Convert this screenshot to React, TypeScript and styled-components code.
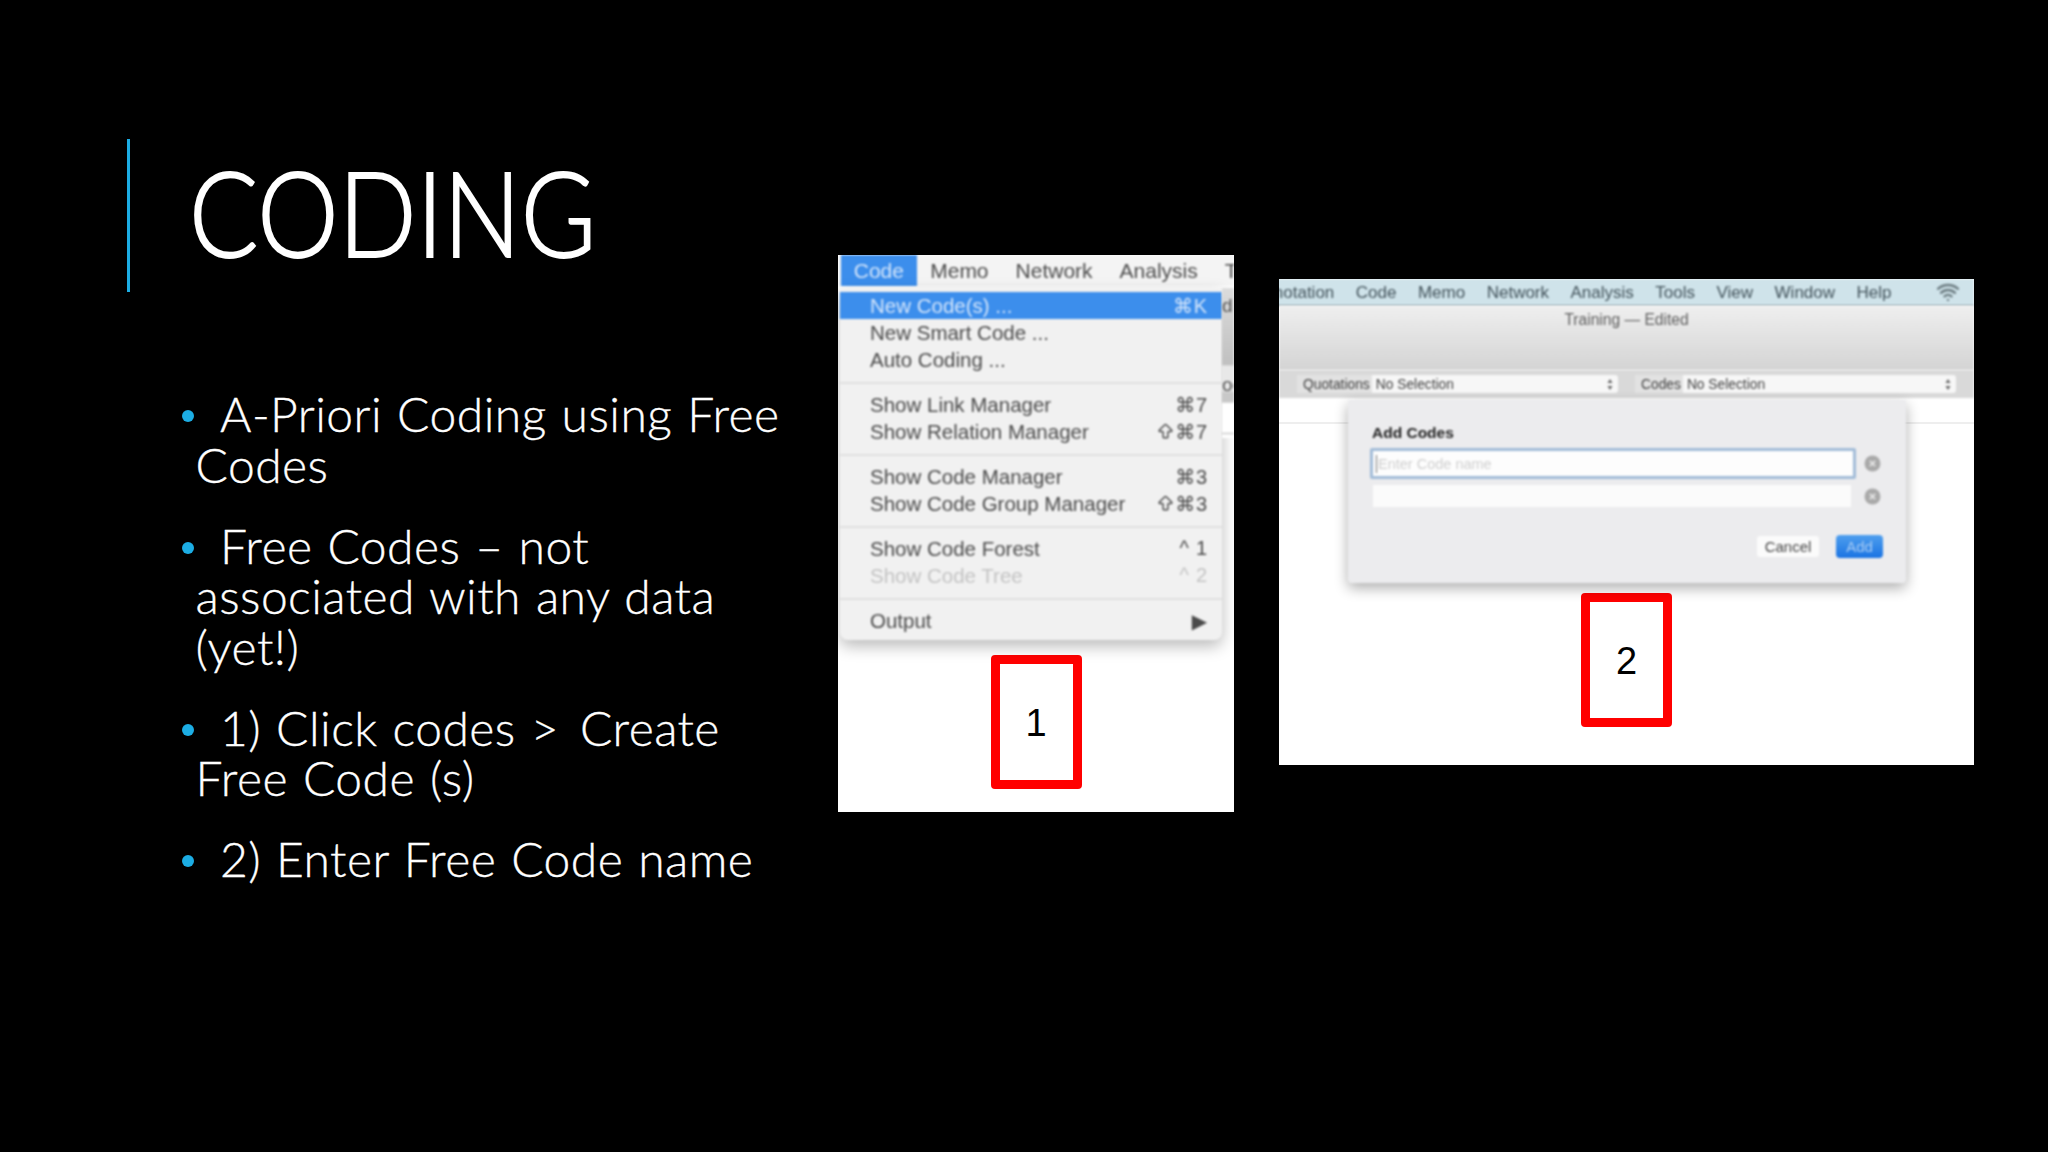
import React from 'react';
import styled, { createGlobalStyle } from 'styled-components';
import { ArrowBigUp, Wifi } from 'lucide-react';

const GlobalStyle = createGlobalStyle`
  * {
    box-sizing: border-box;
  }

  html,
  body {
    margin: 0;
    padding: 0;
    background: #000000;
  }
`;

const Slide = styled.div`
  display: flex;
  align-items: flex-start;
  width: 2048px;
  height: 1152px;
  overflow: hidden;
  background: #000000;
`;

const TextColumn = styled.div`
  flex: 0 0 838px;
  padding: 139px 48px 0 127px;
  font-family: 'Lato', 'Liberation Sans', sans-serif;
  font-weight: 300;
  color: #ffffff;
`;

const Heading = styled.h1`
  display: flex;
  align-items: center;
  height: 153px;
  margin: 0;
  padding: 0 0 8px 59px;
  border-left: 3px solid #1cade4;
  font-size: 118px;
  font-weight: 300;
  line-height: 1;
`;

const HeadingText = styled.span`
  display: inline-block;
  transform: scaleX(0.87);
  transform-origin: left center;
  -webkit-text-stroke: 2px #ffffff;
`;

const Points = styled.ul`
  margin: 97px 0 0;
  padding: 0 0 0 68.5px;
  list-style: none;
  font-size: 48px;
  line-height: 50.5px;
  letter-spacing: 0.45px;
  word-spacing: 1.5px;
  -webkit-text-stroke: 0.35px #ffffff;
`;

const Point = styled.li`
  margin-bottom: 30.5px;
  text-indent: -13.5px;
`;

const Dot = styled.span`
  display: inline-block;
  width: 12px;
  height: 12px;
  margin-right: 26px;
  border-radius: 50%;
  background: #1cade4;
  vertical-align: 10px;
`;

const Chevron = styled.span`
  margin-right: 6px;
`;

const ShotOne = styled.div`
  display: flex;
  flex-direction: column;
  flex: 0 0 396px;
  height: 557px;
  margin-top: 255px;
  overflow: hidden;
  background: #ffffff;
  font-family: 'Liberation Sans', Arial, sans-serif;
`;

const TabBar = styled.div`
  display: flex;
  flex: 0 0 31px;
  padding-left: 3px;
  overflow: hidden;
  background: #f4f4f4;
  filter: blur(0.8px);
`;

const Tab = styled.div<{ $active?: boolean }>`
  display: flex;
  align-items: center;
  padding: 0 ${(p) => (p.$active ? '12.75px' : '13.5px')};
  background: ${(p) => (p.$active ? '#3c8eec' : 'transparent')};
  color: ${(p) => (p.$active ? '#d5e6fb' : '#4c4c4c')};
  font-size: 21px;
  white-space: nowrap;
`;

const MenuArea = styled.div`
  display: flex;
  flex: 0 0 354px;
`;

const Menu = styled.div`
  flex: 0 0 382px;
  height: 352px;
  margin: 2px 0 0 2px;
  padding-top: 4px;
  border-radius: 0 0 8px 8px;
  background: #f1f1f1;
  box-shadow: 0 6px 16px rgba(0, 0, 0, 0.28);
  filter: blur(0.8px);
`;

const MenuRow = styled.div<{ $selected?: boolean; $disabled?: boolean }>`
  display: flex;
  align-items: center;
  justify-content: space-between;
  height: 27.2px;
  padding: 0 14px 0 30px;
  background: ${(p) => (p.$selected ? '#3c8eec' : 'transparent')};
  color: ${(p) => (p.$selected ? '#d5e6fb' : p.$disabled ? '#c3c3c3' : '#4a4a4a')};
  font-size: 20.5px;
  white-space: nowrap;
`;

const Shortcut = styled.span`
  display: flex;
  align-items: center;
  font-family: 'Liberation Sans', 'DejaVu Sans', sans-serif;
  font-size: 20px;
  letter-spacing: 0.8px;
`;

const MenuDivider = styled.div`
  height: 2px;
  margin: 8.3px 0 7.3px;
  background: #e0e0e0;
`;

const BehindMenu = styled.div`
  flex: 1;
  height: 150px;
  margin-top: 2px;
  padding-top: 8px;
  overflow: hidden;
  background: linear-gradient(
    #dcdcdc,
    #c0c0c0 51%,
    #e8e8e8 52%,
    #e8e8e8 68%,
    #c8c8c8 70%,
    #c8c8c8 76%,
    #ffffff 77%,
    #ffffff 96%,
    #d0d0d0 97%,
    #ffffff 98%
  );
  color: #555555;
  font-size: 19px;
  line-height: 20px;
  filter: blur(0.8px);
`;

const BehindFragment = styled.div`
  margin-top: 59px;
`;

const Marker = styled.div<{ $top: number }>`
  display: flex;
  align-items: center;
  justify-content: center;
  align-self: center;
  flex: 0 0 auto;
  width: 91px;
  height: 134px;
  margin-top: ${(p) => p.$top}px;
  padding-top: 2px;
  border: 9.5px solid #ff0000;
  border-radius: 4px;
  background: #ffffff;
  color: #000000;
  font-family: 'Liberation Sans', Arial, sans-serif;
  font-size: 38px;
  line-height: 1;
`;

const ShotTwo = styled.div`
  display: flex;
  flex-direction: column;
  flex: 0 0 695px;
  height: 486px;
  margin: 279px 0 0 45px;
  overflow: hidden;
  background: #ffffff;
  font-family: 'Liberation Sans', Arial, sans-serif;
`;

const AppBar = styled.div`
  display: flex;
  align-items: center;
  gap: 21.5px;
  flex: 0 0 27px;
  margin-left: -26px;
  padding: 2px 14px 0 0;
  border-bottom: 1px solid #7f9299;
  background: #cfe3ea;
  color: #42525a;
  font-size: 17px;
  white-space: nowrap;
  filter: blur(1px);
`;

const WifiSlot = styled.div`
  display: flex;
  margin: -2px 0 0 auto;
  color: #6c7c82;
`;

const TitleBar = styled.div`
  flex: 0 0 64px;
  padding-top: 4px;
  background: linear-gradient(#efefef, #d4d4d4);
  color: #5e5e5e;
  font-size: 15.6px;
  line-height: 20px;
  text-align: center;
  filter: blur(1px);
`;

const FieldStrip = styled.div`
  display: flex;
  align-items: center;
  gap: 17px;
  flex: 0 0 28px;
  padding: 0 18px;
  background: #d9d9d9;
  filter: blur(1px);
`;

const FieldBox = styled.div`
  display: flex;
  align-items: center;
  justify-content: space-between;
  flex: 1;
  height: 18px;
  padding-right: 5px;
  border-radius: 3px;
  background: #f7f7f7;
  color: #3f3f3f;
  font-size: 13.8px;
`;

const FieldText = styled.div`
  display: flex;
  align-items: center;
  gap: 4px;
  height: 100%;
`;

const FieldLabel = styled.span`
  display: flex;
  align-items: center;
  height: 100%;
  padding: 0 2px 0 6px;
  border-radius: 3px 0 0 3px;
  background: #e2e2e2;
`;

const Canvas = styled.div`
  display: flex;
  flex-direction: column;
  flex: 1;
  background: linear-gradient(#ffffff 24px, #eeeeee 24px, #eeeeee 26px, #ffffff 26px);
`;

const Dialog = styled.div`
  display: flex;
  flex-direction: column;
  width: 558px;
  height: 183px;
  margin: 2px 0 0 69px;
  padding: 24px 23px 0 22px;
  border-radius: 0 0 4px 4px;
  background: #ececee;
  box-shadow: 0 5px 14px rgba(0, 0, 0, 0.32);
  filter: blur(1px);
`;

const DialogTitle = styled.div`
  margin-left: 2px;
  color: #1f1f1f;
  font-size: 15.5px;
  font-weight: bold;
  line-height: 18px;
`;

const InputRow = styled.div`
  display: flex;
  align-items: center;
  justify-content: space-between;
`;

const NameInput = styled.div`
  display: flex;
  align-items: center;
  width: 486px;
  height: 31px;
  margin-top: 6px;
  padding-left: 3px;
  border: 3px solid #a2bcd8;
  border-radius: 2px;
  background: #fdfdfd;
  color: #cfcfcf;
  font-size: 14.5px;
`;

const Caret = styled.span`
  width: 1px;
  height: 18px;
  margin-right: 1px;
  background: #777777;
`;

const EmptyInput = styled.div`
  width: 478px;
  height: 22px;
  margin: 6px 0 0 3px;
  background: #fbfbfb;
`;

const ClearIcon = styled.svg`
  flex: 0 0 17px;
  width: 17px;
  height: 17px;
  margin: 6px 2px 0 0;
`;

const DialogActions = styled.div`
  display: flex;
  align-items: center;
  justify-content: flex-end;
  gap: 17px;
  margin-top: 28px;
`;

const CancelButton = styled.div`
  display: flex;
  align-items: center;
  justify-content: center;
  width: 62px;
  height: 21px;
  border-radius: 3px;
  background: #fbfbfb;
  color: #454545;
  font-size: 15px;
`;

const AddButton = styled.div`
  display: flex;
  align-items: center;
  justify-content: center;
  width: 47px;
  height: 23px;
  border-radius: 4px;
  background: linear-gradient(#4f9fee, #1a73e3);
  color: #a9cdf5;
  font-size: 15px;
`;

type MenuItem = { label: string; keys?: string; shift?: boolean; selected?: boolean; disabled?: boolean };

const menuGroups: MenuItem[][] = [
  [
    { label: 'New Code(s) ...', keys: '⌘K', selected: true },
    { label: 'New Smart Code ...' },
    { label: 'Auto Coding ...' },
  ],
  [
    { label: 'Show Link Manager', keys: '⌘7' },
    { label: 'Show Relation Manager', keys: '⌘7', shift: true },
  ],
  [
    { label: 'Show Code Manager', keys: '⌘3' },
    { label: 'Show Code Group Manager', keys: '⌘3', shift: true },
  ],
  [
    { label: 'Show Code Forest', keys: '^ 1' },
    { label: 'Show Code Tree', keys: '^ 2', disabled: true },
  ],
  [{ label: 'Output', keys: '▶' }],
];

const appMenus = ['Annotation', 'Code', 'Memo', 'Network', 'Analysis', 'Tools', 'View', 'Window', 'Help'];

const ClearGlyph = () => (
  <ClearIcon viewBox="0 0 16 16">
    <circle cx="8" cy="8" r="7.5" fill="#a9a9a9" />
    <path d="M5.5 5.5l5 5M10.5 5.5l-5 5" stroke="#e6e6e6" strokeWidth="1.6" />
  </ClearIcon>
);

const StepperGlyph = () => (
  <svg width="6" height="11" viewBox="0 0 6 11">
    <path d="M3 0l2.5 4h-5zM3 11L.5 7h5z" fill="#666666" />
  </svg>
);

export default function App() {
  return (
    <>
      <GlobalStyle />
      <Slide>
        <TextColumn>
          <Heading>
            <HeadingText>CODING</HeadingText>
          </Heading>
          <Points>
            <Point>
              <Dot />A-Priori Coding using Free Codes
            </Point>
            <Point>
              <Dot />Free Codes – not associated with any data (yet!)
            </Point>
            <Point>
              <Dot />1) Click codes <Chevron>&gt;</Chevron> Create Free Code (s)
            </Point>
            <Point>
              <Dot />2) Enter Free Code name
            </Point>
          </Points>
        </TextColumn>

        <ShotOne>
          <TabBar>
            <Tab $active>Code</Tab>
            <Tab>Memo</Tab>
            <Tab>Network</Tab>
            <Tab>Analysis</Tab>
            <Tab>T</Tab>
          </TabBar>
          <MenuArea>
            <Menu>
              {menuGroups.map((group, i) => (
                <React.Fragment key={i}>
                  {i > 0 && <MenuDivider />}
                  {group.map((item) => (
                    <MenuRow key={item.label} $selected={item.selected} $disabled={item.disabled}>
                      <span>{item.label}</span>
                      {item.keys && (
                        <Shortcut>
                          {item.shift && <ArrowBigUp size={19} strokeWidth={1.8} />}
                          {item.keys}
                        </Shortcut>
                      )}
                    </MenuRow>
                  ))}
                </React.Fragment>
              ))}
            </Menu>
            <BehindMenu>
              d<BehindFragment>oc</BehindFragment>
            </BehindMenu>
          </MenuArea>
          <Marker $top={15}>1</Marker>
        </ShotOne>

        <ShotTwo>
          <AppBar>
            {appMenus.map((name) => (
              <span key={name}>{name}</span>
            ))}
            <WifiSlot>
              <Wifi size={24} strokeWidth={2.3} />
            </WifiSlot>
          </AppBar>
          <TitleBar>Training — Edited</TitleBar>
          <FieldStrip>
            <FieldBox>
              <FieldText>
                <FieldLabel>Quotations</FieldLabel>
                No Selection
              </FieldText>
              <StepperGlyph />
            </FieldBox>
            <FieldBox>
              <FieldText>
                <FieldLabel>Codes</FieldLabel>
                No Selection
              </FieldText>
              <StepperGlyph />
            </FieldBox>
          </FieldStrip>
          <Canvas>
            <Dialog>
              <DialogTitle>Add Codes</DialogTitle>
              <InputRow>
                <NameInput>
                  <Caret />
                  Enter Code name
                </NameInput>
                <ClearGlyph />
              </InputRow>
              <InputRow>
                <EmptyInput />
                <ClearGlyph />
              </InputRow>
              <DialogActions>
                <CancelButton>Cancel</CancelButton>
                <AddButton>Add</AddButton>
              </DialogActions>
            </Dialog>
            <Marker $top={10}>2</Marker>
          </Canvas>
        </ShotTwo>
      </Slide>
    </>
  );
}
